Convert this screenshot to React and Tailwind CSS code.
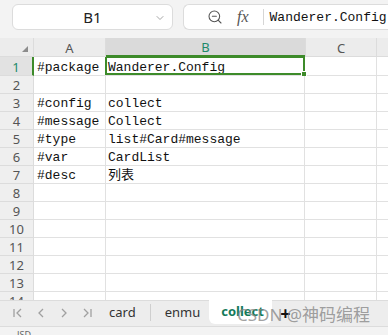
import React from 'react'
import { ZoomOut, ChevronDown } from 'lucide-react'

const MONO = { fontFamily: '"Liberation Mono", "Noto Sans CJK SC", monospace' }

const ROWS = [
  ['#package', 'Wanderer.Config'],
  ['', ''],
  ['#config', 'collect'],
  ['#message', 'Collect'],
  ['#type', 'list#Card#message'],
  ['#var', 'CardList'],
  ['#desc', '列表'],
  ['', ''], ['', ''], ['', ''], ['', ''], ['', ''], ['', ''], ['', ''],
]

function NavIcon({ d }) {
  return (
    <svg width="12" height="12" viewBox="0 0 12 12" fill="none" stroke="#a0a0a0" strokeWidth="1.3">
      <path d={d} />
    </svg>
  )
}

export default function App() {
  return (
    <div className="w-[388px] h-[335px] overflow-hidden bg-white flex flex-col text-[#333]" style={{ fontFamily: '"Noto Sans", "Noto Sans CJK SC", sans-serif' }}>
      {/* name box + formula bar */}
      <div className="h-[38px] shrink-0 bg-[#f3f3f3] flex items-start pt-[4px] pl-[12px] gap-[10px]">
        <div className="w-[161px] h-[26px] bg-white border border-[#dcdcdc] rounded-[6px] relative flex items-center justify-center">
          <span className="text-[15px] text-[#222]">B1</span>
          <ChevronDown className="absolute right-[6px] top-[7px]" size={12} color="#888" strokeWidth={1.5} />
        </div>
        <div className="flex-1 min-w-0 h-[26px] bg-white border border-[#dcdcdc] rounded-l-[6px] border-r-0 flex items-center whitespace-nowrap overflow-hidden">
          <ZoomOut className="ml-[23px] shrink-0" size={16} color="#555" strokeWidth={1.6} />
          <span className="ml-[14px] text-[16px] italic text-[#555]" style={{ fontFamily: '"Liberation Serif", serif' }}>fx</span>
          <span className="ml-[14px] w-px h-[16px] bg-[#d6d6d6] shrink-0" />
          <span className="ml-[6px] pt-[1px] text-[13px] text-[#111]" style={MONO}>Wanderer.Config</span>
        </div>
      </div>

      {/* column header */}
      <div className="h-[19px] shrink-0 flex bg-[#ececec] text-[13px]">
        <div className="w-[34px] shrink-0 border-r border-b border-[#dcdcdc] flex items-end justify-end pr-[5px] pb-[4px]">
          <span className="w-0 h-0 border-l-[6px] border-l-transparent border-b-[6px] border-b-[#8c8c8c]" />
        </div>
        <div className="w-[72px] shrink-0 border-r border-b border-[#dcdcdc] flex items-center justify-center pt-[3px] text-[#555]">A</div>
        <div className="w-[199px] shrink-0 bg-[#dadada] border-b-2 border-[#3d8b2a] flex items-center justify-center pt-[3px] text-[#1f8a6a]">B</div>
        <div className="w-[72px] shrink-0 border-r border-l border-b border-[#dcdcdc] flex items-center justify-center pt-[3px] text-[#555]">C</div>
        <div className="flex-1 border-b border-[#dcdcdc]" />
      </div>

      {/* grid */}
      <div className="h-[243px] shrink-0 overflow-hidden">
        {ROWS.map((r, i) => {
          const sel = i === 0
          return (
            <div key={i} className={`flex ${sel ? 'h-[19px]' : 'h-[18px]'}`}>
              <div className={`w-[34px] shrink-0 border-b border-[#dcdcdc] flex items-center justify-center pt-[3px] text-[13px] ${sel ? 'bg-[#e2e2e2] text-[#1f8a6a] border-r-2 border-r-[#3d8b2a]' : 'bg-[#efefef] text-[#555] border-r border-r-[#dcdcdc]'}`}>
                {i + 1}
              </div>
              <div className="w-[72px] shrink-0 border-r border-b border-[#e1e1e1] flex items-center pl-[3px] pt-[3px] text-[13px] text-[#111] whitespace-nowrap overflow-hidden" style={MONO}>
                {r[0]}
              </div>
              <div className="w-[199px] shrink-0 border-r border-b border-[#e1e1e1] flex items-center pl-[2px] pt-[3px] text-[13px] text-[#111] whitespace-nowrap relative" style={MONO}>
                {r[1]}
                {sel && (
                  <div className="absolute -left-px -top-px right-[-1px] bottom-0 border-2 border-[#3d8b2a]">
                    <div className="absolute right-[-4px] bottom-[-4px] w-[6px] h-[6px] bg-[#3d8b2a] border border-white" />
                  </div>
                )}
              </div>
              <div className="w-[72px] shrink-0 border-r border-b border-[#e1e1e1]" />
              <div className="flex-1 border-b border-[#e1e1e1]" />
            </div>
          )
        })}
      </div>

      {/* sheet tabs */}
      <div className="h-[26px] shrink-0 bg-[#ededed] border-t border-[#dcdcdc] flex items-start relative">
        <div className="flex items-center h-[24px] pl-[12px] gap-[11px]">
          <NavIcon d="M2 2v8M9 2L5 6l4 4" />
          <NavIcon d="M8 2L4 6l4 4" />
          <NavIcon d="M4 2l4 4-4 4" />
          <NavIcon d="M3 2l4 4-4 4M10 2v8" />
        </div>
        <div className="ml-[16px] h-[24px] flex items-center text-[13px] text-[#333]">card</div>
        <div className="ml-[14px] mt-[3px] w-px h-[17px] bg-[#cfcfcf]" />
        <div className="ml-[14px] h-[24px] flex items-center text-[13px] text-[#333]">enmu</div>
        <div className="ml-[9px] -mt-px w-[63px] h-[24px] bg-white rounded-b-[6px] flex items-center pl-[12px] text-[13px] font-bold text-[#137a5a]">collect</div>
        <div className="ml-[8px] h-[24px] flex items-center text-[18px] font-bold text-[#111]">+</div>
        <div className="absolute left-[237px] top-[5px] text-[17px] text-[#888]/80 whitespace-nowrap leading-none">
          CSDN @神码编程
        </div>
      </div>

      {/* status bar */}
      <div className="flex-1 bg-[#f3f3f3] border-t border-[#dcdcdc] overflow-hidden">
        <span className="block ml-[17px] mt-[3px] text-[9px] leading-none text-[#666]">JSD</span>
      </div>
    </div>
  )
}
